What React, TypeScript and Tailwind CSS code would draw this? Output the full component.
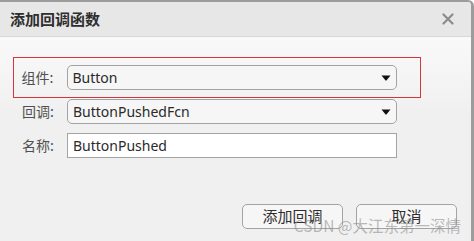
import React from 'react';

const cjk = { fontFamily: '"Noto Sans CJK SC", "Noto Sans", sans-serif' };
const latin = { fontFamily: '"Noto Sans", "Noto Sans CJK SC", sans-serif' };

function Caret() {
  return (
    <svg className="h-[6px] w-[10px]" viewBox="0 0 10 6" xmlns="http://www.w3.org/2000/svg">
      <path d="M0.5 0.5h9L5.6 5.3a0.8 0.8 0 01-1.2 0z" fill="#111" />
    </svg>
  );
}

function CloseIcon() {
  return (
    <svg className="h-[12px] w-[12px]" viewBox="0 0 12 12" fill="none" stroke="#8c8c8c" strokeWidth="2.2" strokeLinecap="round" xmlns="http://www.w3.org/2000/svg">
      <path d="M1.5 1.5l9 9M10.5 1.5l-9 9" />
    </svg>
  );
}

function Label({ text }: { text: string }) {
  return (
    <span className="w-[45px] shrink-0 text-[14px] text-[#505050]" style={cjk}>
      {text}:
    </span>
  );
}

function Select({ value }: { value: string }) {
  return (
    <div className="flex h-[25px] w-[330px] items-center justify-between rounded-[5px] border-[1.5px] border-[#a3a3a3] bg-[#f6f6f6] pl-[5px] pr-[5px]">
      <span className="text-[14px] leading-none text-[#2a2a2a]" style={latin}>{value}</span>
      <Caret />
    </div>
  );
}

export default function App() {
  return (
    <div className="relative h-[241px] w-[474px] overflow-hidden rounded-tr-[6px] border-r-[3px] border-t-[2px] border-[#9c9c9c] bg-[#f0f0f0]">
      <div className="flex h-[35px] items-center justify-between border-b border-[#d8d8d8] bg-[#e7e7e7] pl-[10px] pr-[17px]">
        <span className="text-[15px] font-bold text-[#2e2e2e]" style={cjk}>添加回调函数</span>
        <CloseIcon />
      </div>

      <div className="flex flex-col bg-gradient-to-b from-[#f9f9f9] to-[#f0f0f0] to-[40%] px-[13px] pt-[20px]">
        <div className="flex h-[41px] w-[408px] items-center border-[1.5px] border-[#d8343c] pl-[7.5px]">
          <Label text="组件" />
          <Select value="Button" />
        </div>

        <div className="mt-[1px] flex items-center pl-[9px]">
          <Label text="回调" />
          <Select value="ButtonPushedFcn" />
        </div>

        <div className="mt-[9px] flex items-center pl-[9px]">
          <Label text="名称" />
          <div className="flex h-[25px] w-[330px] items-center border-[1.5px] border-[#a3a3a3] bg-white pl-[5px]">
            <span className="text-[14px] leading-none text-[#2a2a2a]" style={latin}>ButtonPushed</span>
          </div>
        </div>

        <div className="mt-[46px] flex justify-end gap-[13px] pr-[1px]">
          <button type="button" className="flex h-[25px] w-[101px] items-center justify-center rounded-[5px] border-[1.5px] border-[#a3a3a3] bg-[#f6f6f6] text-[15px] text-[#2e2e2e]" style={cjk}>
            添加回调
          </button>
          <button type="button" className="flex h-[25px] w-[101px] items-center justify-center rounded-[5px] border-[1.5px] border-[#a3a3a3] bg-[#f6f6f6] text-[15px] text-[#2e2e2e]" style={cjk}>
            取消
          </button>
        </div>
      </div>

      <span className="pointer-events-none absolute bottom-[8px] right-[10px] text-[15.5px] leading-none text-[#8e8e8e]/60" style={cjk}>
        CSDN @大江东第一深情
      </span>
    </div>
  );
}
